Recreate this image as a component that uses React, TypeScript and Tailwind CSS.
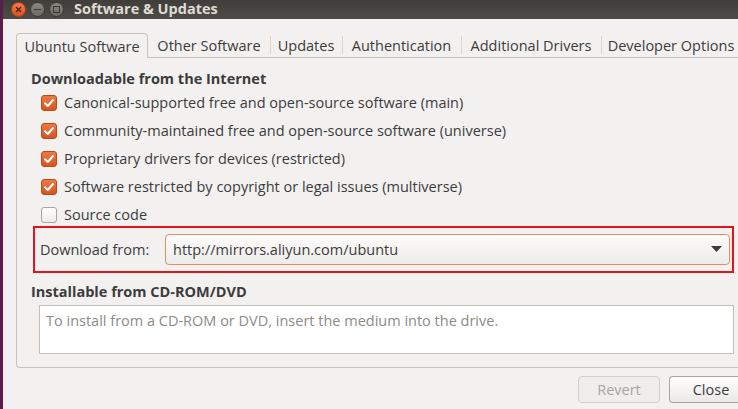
import React from "react";

const font = { fontFamily: '"Open Sans", "Noto Sans", sans-serif' };

function Check({ checked }: { checked: boolean }) {
  if (checked) {
    return (
      <div className="w-[16px] h-[16px] rounded-[3px] border border-[#b84a1b] bg-gradient-to-b from-[#ec7a45] to-[#d6541f] flex items-center justify-center shrink-0">
        <svg width="12" height="12" viewBox="0 0 12 12">
          <path d="M2 6.2 L4.8 9 L10 3" stroke="#fff" strokeWidth="2" fill="none" strokeLinecap="round" strokeLinejoin="round" />
        </svg>
      </div>
    );
  }
  return <div className="w-[16px] h-[16px] rounded-[3px] border border-[#a9a6a1] bg-gradient-to-b from-[#ffffff] to-[#eeecea] shrink-0" />;
}

const items: [boolean, string][] = [
  [true, "Canonical-supported free and open-source software (main)"],
  [true, "Community-maintained free and open-source software (universe)"],
  [true, "Proprietary drivers for devices (restricted)"],
  [true, "Software restricted by copyright or legal issues (multiverse)"],
  [false, "Source code"],
];

const tabs = ["Other Software", "Updates", "Authentication", "Additional Drivers", "Developer Options"];
const tabW = ["w-[122px]", "w-[72px]", "w-[119px]", "w-[140px]", "w-[140px]"];

export default function App() {
  return (
    <div className="w-[738px] h-[409px] flex overflow-hidden text-[#3c3c3c] text-[14.5px]" style={font}>
      <div className="w-[3px] bg-[#5a1e4a] shrink-0" />
      <div className="flex-1 flex flex-col bg-[#f2f1f0] min-w-0">
        <div className="h-[19px] bg-gradient-to-b from-[#3f3e3a] to-[#4f4c47] flex items-center shrink-0">
          <div className="flex items-center gap-[4px] ml-[8px]">
            <div className="w-[15px] h-[15px] rounded-full bg-gradient-to-b from-[#f37a4c] to-[#e0501e] border border-[#b63f14] flex items-center justify-center">
              <svg width="7" height="7" viewBox="0 0 7 7"><path d="M1 1L6 6M6 1L1 6" stroke="#4a2214" strokeWidth="1.3" /></svg>
            </div>
            <div className="w-[15px] h-[15px] rounded-full bg-gradient-to-b from-[#8a8782] to-[#6b6964] border border-[#3b3a36] flex items-center justify-center">
              <div className="w-[7px] h-[1.5px] bg-[#3a3935]" />
            </div>
            <div className="w-[15px] h-[15px] rounded-full bg-gradient-to-b from-[#8a8782] to-[#6b6964] border border-[#3b3a36] flex items-center justify-center">
              <div className="w-[7px] h-[7px] border border-[#3a3935]" />
            </div>
          </div>
          <div className="ml-[10px] text-[#dfdbd2] font-bold text-[14.5px] leading-none">Software &amp; Updates</div>
        </div>

        <div className="flex-1 flex flex-col pl-[13px] pt-[14px]">
          <div className="flex h-[25px] items-stretch">
            <div className="w-[132px] shrink-0 border border-b-0 border-[#c6c3be] rounded-t-[4px] flex items-center justify-center pt-[1px]">Ubuntu Software</div>
            {tabs.map((t, i) => (
              <div key={t} className={`${tabW[i]} shrink-0 border-b border-[#c6c3be] flex items-center justify-center pt-[1px] relative whitespace-nowrap`}>
                {i > 0 && <div className="absolute left-0 top-[3px] bottom-[3px] w-px bg-[#d9d6d2]" />}
                {t}
              </div>
            ))}
            <div className="flex-1 border-b border-[#c6c3be]" />
          </div>
          <div className="h-[310px] border-l border-b border-[#c6c3be] rounded-bl-[4px] flex flex-col pl-[14px] pr-[4px]">
            <div className="font-bold mt-[11px] h-[20px] flex items-center">Downloadable from the Internet</div>
            <div className="flex flex-col">
              {items.map(([c, t]) => (
                <div key={t} className="h-[28px] flex items-center gap-[7px] pl-[10px] whitespace-nowrap">
                  <Check checked={c} />
                  <span>{t}</span>
                </div>
              ))}
            </div>
            <div className="mt-[-3px] ml-[2px] h-[47px] border-2 border-[#e3141e] flex items-center pl-[5px] pr-[2px]">
              <span className="w-[125px] shrink-0">Download from:</span>
              <div className="flex-1 h-[31px] rounded-[4px] border border-[#e58c66] bg-gradient-to-b from-[#fcfcfb] to-[#eeecea] flex items-center pl-[7px] pr-[7px]">
                <span className="flex-1">http://mirrors.aliyun.com/ubuntu</span>
                <svg width="11" height="7" viewBox="0 0 11 7"><path d="M0 0H11L5.5 6Z" fill="#3c3c3c" /></svg>
              </div>
            </div>
            <div className="font-bold mt-[9px] h-[20px] flex items-center">Installable from CD-ROM/DVD</div>
            <div className="ml-[8px] mt-[3px] h-[49px] bg-white border border-[#c3c0bb] pl-[6px] pt-[4px] text-[#8e8b86]">
              To install from a CD-ROM or DVD, insert the medium into the drive.
            </div>
          </div>
          <div className="flex justify-end gap-[9px] mt-[8px]">
            <div className="w-[82px] h-[27px] rounded-[4px] border border-[#d3d0cc] bg-[#efeeec] text-[#a8a5a0] flex items-center justify-center">Revert</div>
            <div className="w-[69px] h-[27px] rounded-l-[4px] border border-r-0 border-[#a8a49e] bg-gradient-to-b from-[#ffffff] to-[#ebe9e6] flex items-center justify-center pl-[14px]">Close</div>
          </div>
        </div>
      </div>
    </div>
  );
}
